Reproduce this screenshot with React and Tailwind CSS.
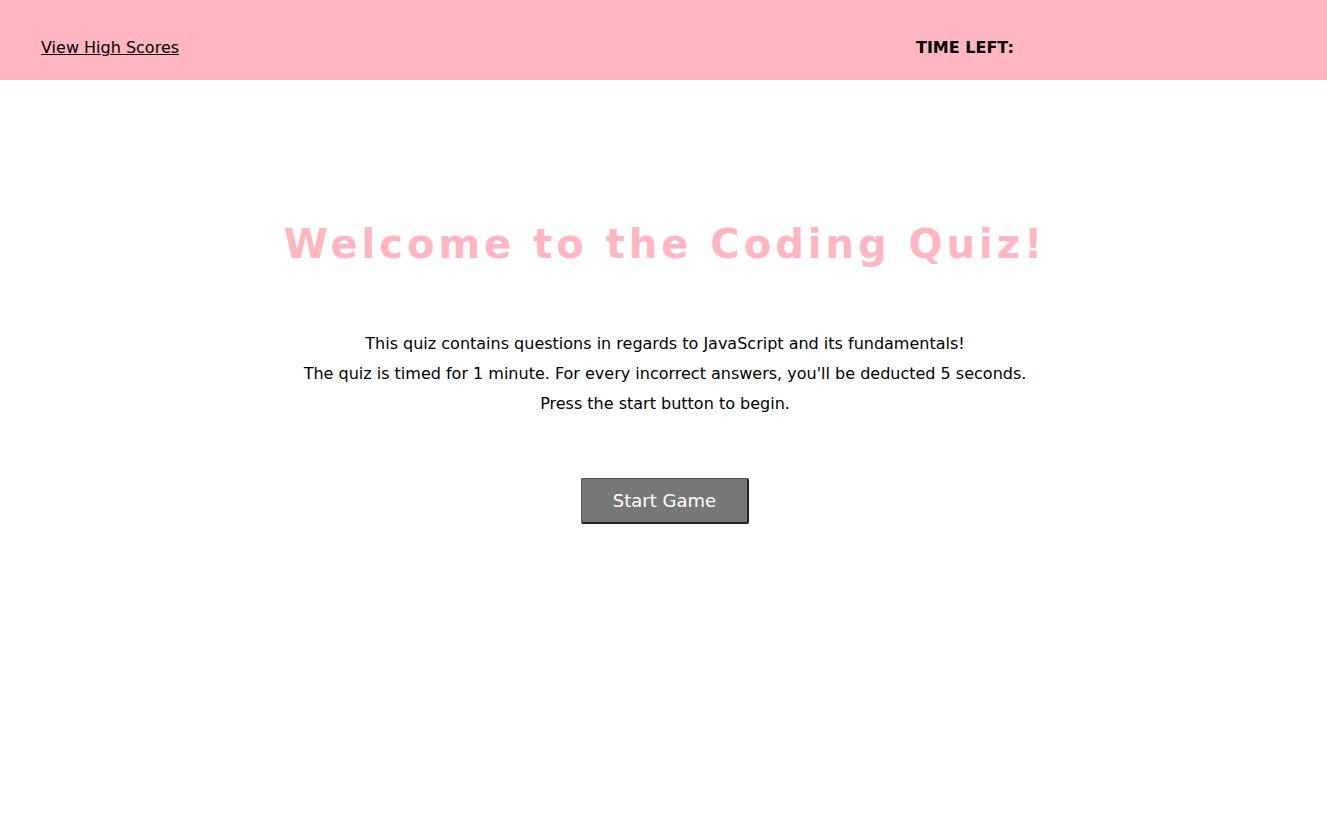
export default function App() {
  return (
    <div className="min-h-screen bg-white text-black" style={{ fontFamily: '"DejaVu Sans", Verdana, sans-serif' }}>
      <header className="h-[80px] bg-[#ffb6c1] flex items-center pt-[16px]">
        <a href="#" className="ml-[41px] text-[16px] underline text-black">View High Scores</a>
        <div className="ml-auto w-[411px] text-[16px] font-bold">TIME LEFT:</div>
      </header>
      <main className="flex flex-col items-center pl-[3px]">
        <h1 className="mt-[136px] text-[40px] leading-[56px] font-bold tracking-[4px] text-[#ffb6c1]">
          Welcome to the Coding Quiz!
        </h1>
        <div className="mt-[57px] text-center text-[16px] leading-[30px]">
          <p>This quiz contains questions in regards to JavaScript and its fundamentals!</p>
          <p>The quiz is timed for 1 minute. For every incorrect answers, you'll be deducted 5 seconds.</p>
          <p>Press the start button to begin.</p>
        </div>
        <button className="mt-[59px] w-[168px] h-[46px] bg-[#777777] text-white text-[18px] border border-[#555] border-r-2 border-b-2 border-r-[#222] border-b-[#222] rounded-[2px]">
          Start Game
        </button>
      </main>
    </div>
  );
}
